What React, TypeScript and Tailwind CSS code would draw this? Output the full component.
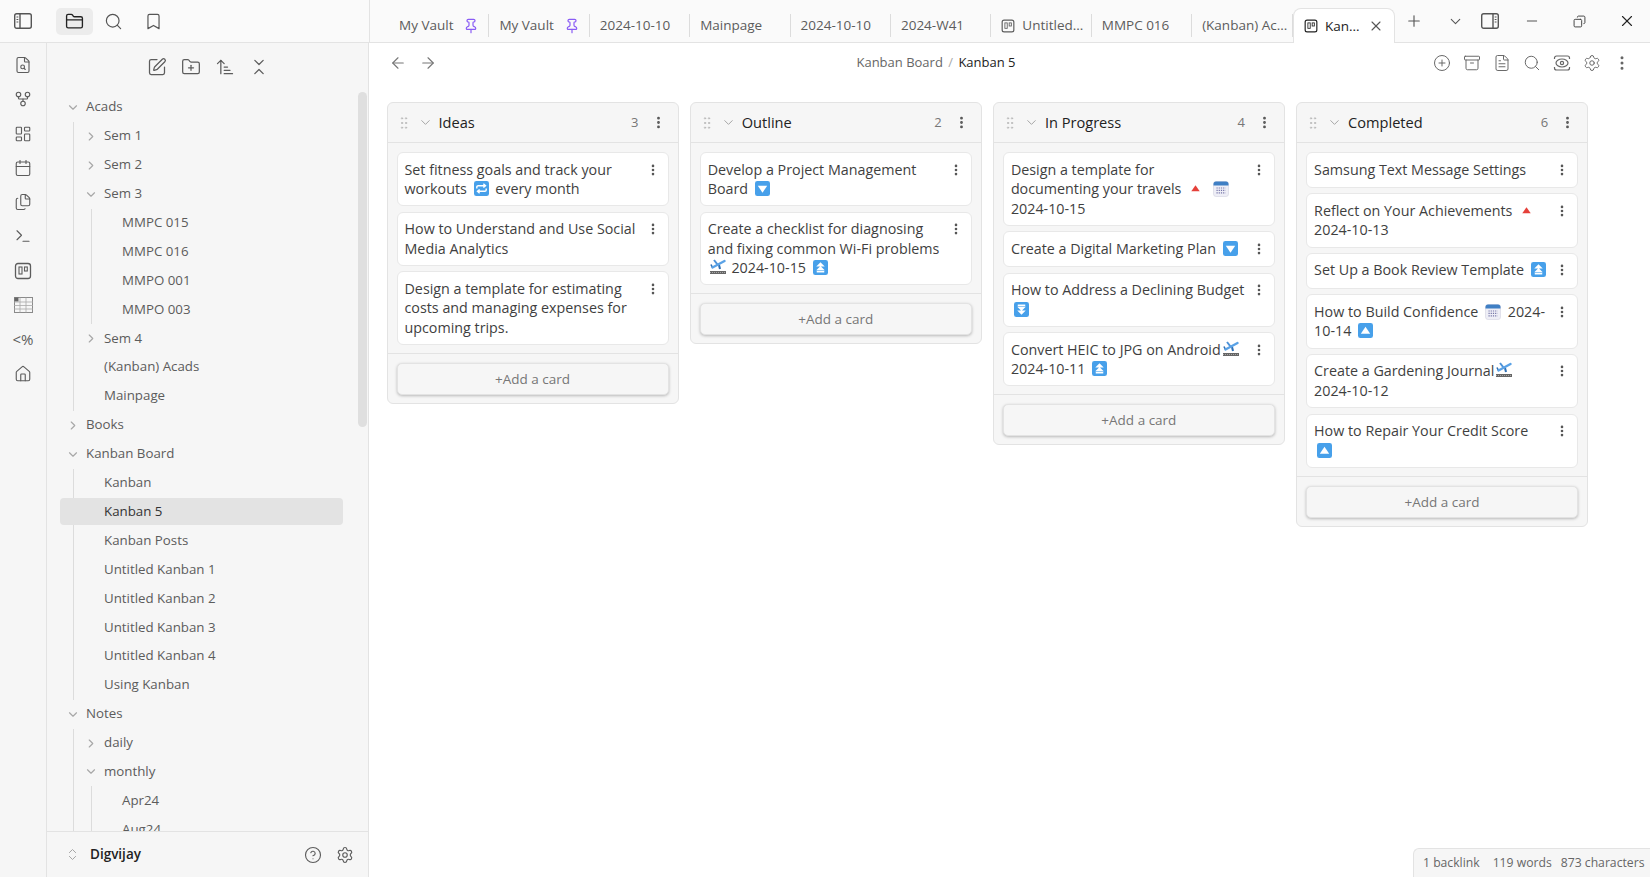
import type { ReactNode } from 'react';
import {
  Archive,
  ArrowLeft,
  ArrowRight,
  ArrowUpNarrowWide,
  Bookmark,
  Calendar,
  ChevronDown,
  ChevronRight,
  ChevronsDownUp,
  ChevronsUpDown,
  CircleHelp,
  CirclePlus,
  Copy,
  FileSearch,
  Files,
  FileText,
  FolderClosed,
  FolderPlus,
  GitFork,
  GripVertical,
  House,
  LayoutDashboard,
  Minus,
  MoreVertical,
  Pin,
  Plus,
  Search,
  Settings,
  SquarePen,
  Terminal,
  X,
} from 'lucide-react';

type TreeItem = { name: string; open?: boolean; folder?: boolean; selected?: boolean; children?: TreeItem[] };

const tree: TreeItem[] = [
  {
    name: 'Acads',
    folder: true,
    open: true,
    children: [
      { name: 'Sem 1', folder: true },
      { name: 'Sem 2', folder: true },
      {
        name: 'Sem 3',
        folder: true,
        open: true,
        children: [{ name: 'MMPC 015' }, { name: 'MMPC 016' }, { name: 'MMPO 001' }, { name: 'MMPO 003' }],
      },
      { name: 'Sem 4', folder: true },
      { name: '(Kanban) Acads' },
      { name: 'Mainpage' },
    ],
  },
  { name: 'Books', folder: true },
  {
    name: 'Kanban Board',
    folder: true,
    open: true,
    children: [
      { name: 'Kanban' },
      { name: 'Kanban 5', selected: true },
      { name: 'Kanban Posts' },
      { name: 'Untitled Kanban 1' },
      { name: 'Untitled Kanban 2' },
      { name: 'Untitled Kanban 3' },
      { name: 'Untitled Kanban 4' },
      { name: 'Using Kanban' },
    ],
  },
  {
    name: 'Notes',
    folder: true,
    open: true,
    children: [
      { name: 'daily', folder: true },
      {
        name: 'monthly',
        folder: true,
        open: true,
        children: [{ name: 'Apr24' }, { name: 'Aug24' }],
      },
    ],
  },
];

function TreeNode({ item }: { item: TreeItem }) {
  return (
    <div>
      <div
        className={
          item.selected
            ? 'relative mt-[1px] mb-[0.9px] -ml-[14px] flex h-[27px] items-center rounded-[4px] bg-[#e3e3e3] pl-[24px] text-[13.3px] text-[#333]'
            : 'flex h-[28.9px] items-center pl-[10px] text-[13.3px] text-[#5c5c5c]'
        }
      >
        <span className="mr-[6px] flex w-[14px] justify-center text-[#a8a8a8]">
          {item.folder && (item.open ? <ChevronDown size={15} /> : <ChevronRight size={15} />)}
        </span>
        {item.name}
      </div>
      {item.children && (
        <div className="ml-[17px] border-l border-[#dcdcdc]">
          {item.children.map((c) => (
            <TreeNode key={c.name} item={c} />
          ))}
        </div>
      )}
    </div>
  );
}

function KanbanIcon({ size, width = 1.3 }: { size: number; width?: number }) {
  return (
    <svg viewBox="0 0 18 18" width={size} height={size} fill="none" stroke="currentColor" strokeWidth={width} className="shrink-0">
      <rect x="1.5" y="1.5" width="15" height="15" rx="2.5" />
      <rect x="5" y="5" width="3" height="7" strokeWidth="1.1" />
      <rect x="10.5" y="5" width="2.8" height="4" strokeWidth="1.1" />
    </svg>
  );
}

function SidePanelIcon({ side }: { side: 'left' | 'right' }) {
  const x = side === 'left' ? 7 : 13;
  const t1 = side === 'left' ? 3.5 : 14.7;
  return (
    <svg viewBox="0 0 20 20" width={20} height={20} fill="none" stroke="currentColor" strokeWidth="1.4">
      <rect x="1.7" y="2.7" width="16.6" height="14.6" rx="2" />
      <path d={`M${x} 2.7v14.6`} />
      <path d={`M${t1} 6h1.8M${t1} 8.5h1.8M${t1} 11h1.8`} strokeWidth="1.1" />
    </svg>
  );
}

function BlueBox({ children }: { children: ReactNode }) {
  return (
    <svg viewBox="0 0 16 16" className="mx-[3px] inline-block h-[15px] w-[15px] align-[-2px]">
      <rect width="16" height="16" rx="2.5" fill="#47a0ea" />
      {children}
    </svg>
  );
}

const Repeat = () => (
  <BlueBox>
    <path d="M3 8V6.5A1.5 1.5 0 0 1 4.5 5H12M10 3l2.3 2L10 7M13 8v1.5A1.5 1.5 0 0 1 11.5 11H4M6 9l-2.3 2L6 13" fill="none" stroke="#fff" strokeWidth="1.5" />
  </BlueBox>
);
const Down = () => (
  <BlueBox>
    <path d="M3 5h10l-5 7.5z" fill="#fff" />
  </BlueBox>
);
const Up = () => (
  <BlueBox>
    <path d="M3 11.5h10L8 4z" fill="#fff" />
  </BlueBox>
);
const DoubleUp = () => (
  <BlueBox>
    <path d="M8 2.5 12.5 7h-9zM8 6.5 12.5 11h-9z" fill="#fff" />
    <rect x="4" y="11.5" width="8" height="1.8" fill="#fff" />
  </BlueBox>
);
const DoubleDown = () => (
  <BlueBox>
    <path d="M8 13.5 12.5 9h-9zM8 9.5 12.5 5h-9z" fill="#fff" />
    <rect x="4" y="2.7" width="8" height="1.8" fill="#fff" />
  </BlueBox>
);
const RedUp = () => (
  <svg viewBox="0 0 16 16" className="mx-[3px] inline-block h-[15px] w-[15px] align-[-2px]">
    <path d="M3.5 11h9L8 4.5z" fill="#e5403a" />
  </svg>
);
const Cal = () => (
  <svg viewBox="0 0 16 16" className="mx-[3px] inline-block h-[16px] w-[16px] align-[-3px]">
    <rect x="0.5" y="0.5" width="15" height="15" rx="2.5" fill="#eeeef6" stroke="#d4d4e0" strokeWidth="0.6" />
    <path d="M.5 4.5V3A2.5 2.5 0 0 1 3 .5h10A2.5 2.5 0 0 1 15.5 3v1.5z" fill="#3f7fc4" />
    <path d="M3.5 7h9M3.5 9.4h9M3.5 11.8h9" stroke="#7474a8" strokeWidth="1.2" strokeDasharray="1.2 1" />
  </svg>
);
const Plane = () => (
  <svg viewBox="0 0 18 18" className="mx-[1px] inline-block h-[18px] w-[18px] align-[-3px]">
    <path d="M8.5 6.5 5 2" stroke="#4c92d8" strokeWidth="2" fill="none" />
    <path d="M10 7l1 4" stroke="#2f6fb4" strokeWidth="2" fill="none" />
    <path d="M3.5 9.5 2 6.5" stroke="#2f6fb4" strokeWidth="1.6" fill="none" />
    <path d="M3.5 9.5 15.5 3" stroke="#5aa2e6" strokeWidth="2.4" strokeLinecap="round" fill="none" />
    <rect x="1" y="13" width="16" height="3" fill="#666" />
    <path d="M1 14.5h16" stroke="#c4c4c4" strokeWidth="0.7" strokeDasharray="1 1" />
  </svg>
);

type Col = { title: string; cards: ReactNode[] };

const columns: Col[] = [
  {
    title: 'Ideas',
    cards: [
      <>Set fitness goals and track your workouts <Repeat /> every month</>,
      <>How to Understand and Use Social Media Analytics</>,
      <>Design a template for estimating costs and managing expenses for upcoming trips.</>,
    ],
  },
  {
    title: 'Outline',
    cards: [
      <>Develop a Project Management Board <Down /></>,
      <>Create a checklist for diagnosing and fixing common Wi-Fi problems <Plane /> 2024-10-15 <DoubleUp /></>,
    ],
  },
  {
    title: 'In Progress',
    cards: [
      <>Design a template for<br />documenting your travels <RedUp /> <Cal /> 2024-10-15</>,
      <>Create a Digital Marketing Plan <Down /></>,
      <>How to Address a Declining Budget <DoubleDown /></>,
      <>Convert HEIC to JPG on Android<Plane /> 2024-10-11 <DoubleUp /></>,
    ],
  },
  {
    title: 'Completed',
    cards: [
      <>Samsung Text Message Settings</>,
      <>Reflect on Your Achievements <RedUp /> 2024-10-13</>,
      <>Set Up a Book Review Template <DoubleUp /></>,
      <>How to Build Confidence <Cal /> 2024-10-14 <Up /></>,
      <>Create a Gardening Journal<Plane /> 2024-10-12</>,
      <>How to Repair Your Credit Score<br /><Up /></>,
    ],
  },
];

function Column({ col }: { col: Col }) {
  return (
    <div className="w-[292px] shrink-0 rounded-[6px] border border-[#e3e3e3] bg-[#f6f6f6]">
      <div className="flex h-[40px] items-center border-b border-[#e3e3e3] pl-[8px] pr-[12px]">
        <GripVertical size={16} className="text-[#bbb]" strokeWidth={1.5} />
        <ChevronDown size={15} className="ml-[6px] text-[#a0a0a0]" strokeWidth={1.5} />
        <span className="ml-[6px] flex-1 text-[14.6px] font-medium text-[#222]">{col.title}</span>
        <span className="mr-[12px] text-[13px] text-[#777]">{col.cards.length}</span>
        <MoreVertical size={15} className="text-[#555]" strokeWidth={2.5} />
      </div>
      <div className="flex flex-col gap-[5.4px] border-b border-[#e3e3e3] p-[9px] pb-[8px]">
        {col.cards.map((c, i) => (
          <div key={i} className="flex min-h-[36px] rounded-[6px] border border-[#e8e8e8] bg-white py-[6.5px] pl-[7px] pr-[8px]">
            <div className="min-w-0 flex-1 text-[14.3px] leading-[19.6px] text-[#3f3f3f]">{c}</div>
            <MoreVertical size={14} className="mt-[3px] ml-[2px] shrink-0 text-[#555]" strokeWidth={2.5} />
          </div>
        ))}
      </div>
      <div className="p-[9px] pb-[8px]">
        <div className="flex h-[32px] items-center justify-center rounded-[5px] border border-[#e3e3e3] bg-[#f6f6f6] text-[13.5px] text-[#777] shadow-[0_1px_3px_rgba(0,0,0,0.25)]">
          +Add a card
        </div>
      </div>
    </div>
  );
}

const tabs = ['My Vault', 'My Vault', '2024-10-10', 'Mainpage', '2024-10-10', '2024-W41', 'Untitled...', 'MMPC 016', '(Kanban) Ac...'];

export default function App() {
  return (
    <div className="relative flex h-[877px] w-[1650px] flex-col overflow-hidden bg-white [font-family:'Open_Sans',sans-serif]">
      {/* title bar */}
      <div className="flex h-[43px] shrink-0 border-b border-[#e3e3e3] bg-[#fafafa]">
        <div className="flex w-[370px] shrink-0 items-center border-r border-[#e3e3e3] text-[#555]">
          <div className="ml-[13px]">
            <SidePanelIcon side="left" />
          </div>
          <div className="ml-[23px] flex h-[27px] w-[37px] items-center justify-center rounded-[5px] bg-[#ececec] text-[#222]">
            <FolderClosed size={19} strokeWidth={1.7} />
          </div>
          <Search size={19} className="ml-[11px]" strokeWidth={1.5} />
          <Bookmark size={19} className="ml-[21px]" strokeWidth={1.5} />
        </div>
        <div className="flex flex-1 items-end pl-[19px]">
          {tabs.map((t, i) => (
            <div key={i} className="flex h-[33px] w-[100.4px] items-center">
              <div className="flex h-[23px] w-full items-center border-r border-[#dcdcdc] pl-[10px] pr-[9px] text-[13.5px] text-[#5c5c5c]">
                {i === 6 && (
                  <span className="mr-[7px]">
                    <KanbanIcon size={14} width={1.5} />
                  </span>
                )}
                <span className="flex-1 whitespace-nowrap">{t}</span>
                {i < 2 && <Pin size={16} className="text-[#8a5cf5]" strokeWidth={1.8} />}
              </div>
            </div>
          ))}
          <div className="relative z-10 -mb-px ml-[0.4px] flex h-[35px] w-[102px] items-center rounded-t-[8px] border border-b-0 border-[#e3e3e3] bg-white pl-[10px] pr-[10px] text-[13.5px] text-[#222]">
            <span className="mr-[7px]">
              <KanbanIcon size={14} width={1.5} />
            </span>
            <span className="flex-1">Kan...</span>
            <X size={16} className="text-[#555]" strokeWidth={1.6} />
          </div>
          <div className="flex h-full flex-1 items-center text-[#555]">
            <Plus size={18} className="ml-[10px]" strokeWidth={1.5} />
            <ChevronDown size={17} className="ml-[24px]" strokeWidth={1.5} />
            <div className="ml-[16px]">
              <SidePanelIcon side="right" />
            </div>
            <Minus size={16} className="ml-[24px]" strokeWidth={1.5} />
            <Copy size={13} className="ml-[33px] -scale-x-100 text-[#444]" strokeWidth={1.8} />
            <X size={18} className="ml-[32px] text-[#222]" strokeWidth={1.5} />
          </div>
        </div>
      </div>

      <div className="flex min-h-0 flex-1">
        {/* ribbon */}
        <div className="flex w-[47px] shrink-0 flex-col items-center gap-[16.3px] border-r border-[#e3e3e3] bg-[#f6f6f6] pt-[13px] text-[#5c5c5c]">
          <FileSearch size={18} strokeWidth={1.5} />
          <GitFork size={18} strokeWidth={1.5} />
          <LayoutDashboard size={18} strokeWidth={1.5} />
          <Calendar size={18} strokeWidth={1.5} />
          <Files size={18} strokeWidth={1.5} />
          <Terminal size={18} strokeWidth={1.5} />
          <KanbanIcon size={18} />
          <svg viewBox="0 0 19 18" className="h-[18px] w-[19px]">
            <rect x="0.5" y="1.5" width="18" height="15" fill="none" stroke="#8a8a8a" />
            <rect x="0.5" y="1.5" width="4" height="4" fill="#666" />
            <path d="M0 6h19M0 9.5h19M0 13h19M6 1.5v15M12 1.5v15" stroke="#aaa" strokeWidth="0.8" />
          </svg>
          <span className="flex h-[18px] items-center text-[15px] font-medium">&lt;%</span>
          <House size={18} strokeWidth={1.5} />
        </div>

        {/* file explorer */}
        <div className="relative flex w-[322px] shrink-0 flex-col border-r border-[#e3e3e3] bg-[#f6f6f6]">
          <div className="flex h-[47px] shrink-0 items-center gap-[14px] pl-[100px] text-[#5c5c5c]">
            <SquarePen size={20} strokeWidth={1.5} />
            <FolderPlus size={20} strokeWidth={1.5} />
            <ArrowUpNarrowWide size={20} strokeWidth={1.5} />
            <ChevronsDownUp size={20} strokeWidth={1.5} />
          </div>
          <div className="min-h-0 flex-1 overflow-hidden pl-[9px] pr-[25px] pt-[3px]">
            {tree.map((t) => (
              <TreeNode key={t.name} item={t} />
            ))}
          </div>
          <div className="flex h-[46px] shrink-0 items-center border-t border-[#e3e3e3] pl-[18px] pr-[14px]">
            <ChevronsUpDown size={15} className="text-[#a0a0a0]" strokeWidth={1.5} />
            <span className="ml-[10px] flex-1 text-[13.5px] font-semibold text-[#222]">Digvijay</span>
            <CircleHelp size={18} className="text-[#5c5c5c]" strokeWidth={1.5} />
            <Settings size={18} className="ml-[14px] text-[#5c5c5c]" strokeWidth={1.5} />
          </div>
          <div className="absolute left-[311px] top-[49px] h-[335px] w-[9px] rounded-[5px] bg-[#dfdfdf]" />
        </div>

        {/* main */}
        <div className="flex min-w-0 flex-1 flex-col">
          <div className="flex h-[40px] shrink-0 items-center text-[#777]">
            <div className="flex w-[73px] justify-end gap-[12px] pr-[5px]">
              <ArrowLeft size={18} strokeWidth={1.5} />
              <ArrowRight size={18} strokeWidth={1.5} />
            </div>
            <div className="flex-1 text-center text-[13px] text-[#666]">
              Kanban Board <span className="mx-[2px] text-[#aaa]">/</span> <span className="text-[#222]">Kanban 5</span>
            </div>
            <div className="flex w-[220px] items-center gap-[12px] pl-[3px] text-[#666]">
              <CirclePlus size={18} strokeWidth={1.3} />
              <Archive size={18} strokeWidth={1.3} />
              <FileText size={18} strokeWidth={1.3} />
              <Search size={18} strokeWidth={1.3} />
              <svg viewBox="0 0 18 18" className="h-[18px] w-[18px]" fill="none" stroke="currentColor" strokeWidth="1.2">
                <path d="M1.5 5V4a2 2 0 0 1 2-2h11a2 2 0 0 1 2 2v1M1.5 13v1a2 2 0 0 0 2 2h11a2 2 0 0 0 2-2v-1" />
                <ellipse cx="9" cy="9" rx="6" ry="4" />
                <circle cx="9" cy="9" r="1.6" />
              </svg>
              <Settings size={18} strokeWidth={1.3} />
              <MoreVertical size={18} strokeWidth={2} />
            </div>
          </div>
          <div className="flex items-start gap-[11.2px] pl-[17.5px] pt-[19px]">
            {columns.map((c) => (
              <Column key={c.title} col={c} />
            ))}
          </div>
        </div>
      </div>

      <div className="absolute bottom-0 right-0 flex h-[29px] w-[237px] items-center whitespace-nowrap rounded-tl-[6px] border-l border-t border-[#e3e3e3] bg-[#f6f6f6] pl-[9px] text-[12.2px] text-[#666]">
        <span>1 backlink</span>
        <span className="ml-[13px]">119 words</span>
        <span className="ml-[9px]">873 characters</span>
      </div>
    </div>
  );
}
